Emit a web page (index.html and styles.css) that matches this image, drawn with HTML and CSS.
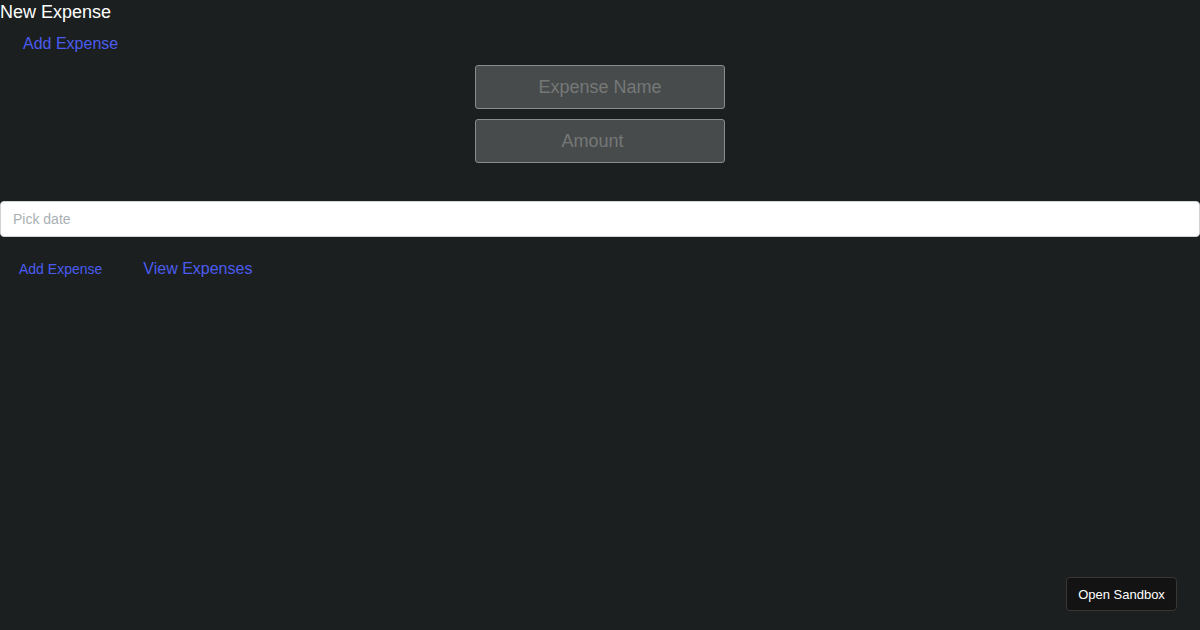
FILE: index.html
```html
<!DOCTYPE html>
<html>
<head>
<meta charset="utf-8">
<link rel="stylesheet" href="styles.css">
</head>
<body>
<div class="page">
  <div class="title">New Expense</div>
  <a class="top-link">Add Expense</a>
  <div class="fields">
    <input class="field" type="text" placeholder="Expense Name">
    <input class="field" type="number" placeholder="Amount">
  </div>
  <input class="date" type="text" placeholder="Pick date">
  <div class="links">
    <a class="small-link">Add Expense</a>
    <a class="big-link">View Expenses</a>
  </div>
</div>
<button class="sandbox">Open Sandbox</button>
</body>
</html>
```
FILE: styles.css
```css
html, body {
  margin: 0;
  padding: 0;
  background: #1c1f1f;
  height: 100%;
  font-family: "Liberation Sans", Arial, sans-serif;
}
.page {
  display: flex;
  flex-direction: column;
}
.title {
  color: #ffffff;
  font-size: 18px;
  line-height: 22px;
  margin-top: 1px;
}
.top-link {
  color: #4a5cf0;
  font-size: 16px;
  line-height: 20px;
  margin: 11px 0 0 23px;
}
.fields {
  display: flex;
  flex-direction: column;
  align-items: center;
  gap: 10px;
  margin-top: 11px;
}
.field {
  box-sizing: border-box;
  width: 250px;
  height: 44px;
  background: #484b4b;
  border: 1px solid #8a8c8c;
  border-radius: 3px;
  color: #ddd;
  font-family: "Liberation Sans", Arial, sans-serif;
  font-size: 18px;
  text-align: center;
  outline: none;
}
.field::placeholder {
  color: #757878;
}
.date {
  box-sizing: border-box;
  width: 100%;
  height: 36px;
  margin-top: 38px;
  background: #ffffff;
  border: 1px solid #cfd3d6;
  border-radius: 4px;
  padding: 0 12px;
  font-family: "Liberation Sans", Arial, sans-serif;
  font-size: 14px;
  outline: none;
}
.date::placeholder {
  color: #a9b0b4;
}
.links {
  display: flex;
  align-items: baseline;
  margin: 23px 0 0 19px;
}
.small-link {
  color: #4a5cf0;
  font-size: 14px;
}
.big-link {
  color: #4a5cf0;
  font-size: 16px;
  margin-left: 41px;
}
.sandbox {
  position: fixed;
  right: 23px;
  bottom: 19px;
  width: 111px;
  height: 34px;
  background: #131313;
  color: #ffffff;
  border: 1px solid #3a3633;
  border-radius: 4px;
  font-family: "Liberation Sans", Arial, sans-serif;
  font-size: 13px;
  padding: 0;
}
```
